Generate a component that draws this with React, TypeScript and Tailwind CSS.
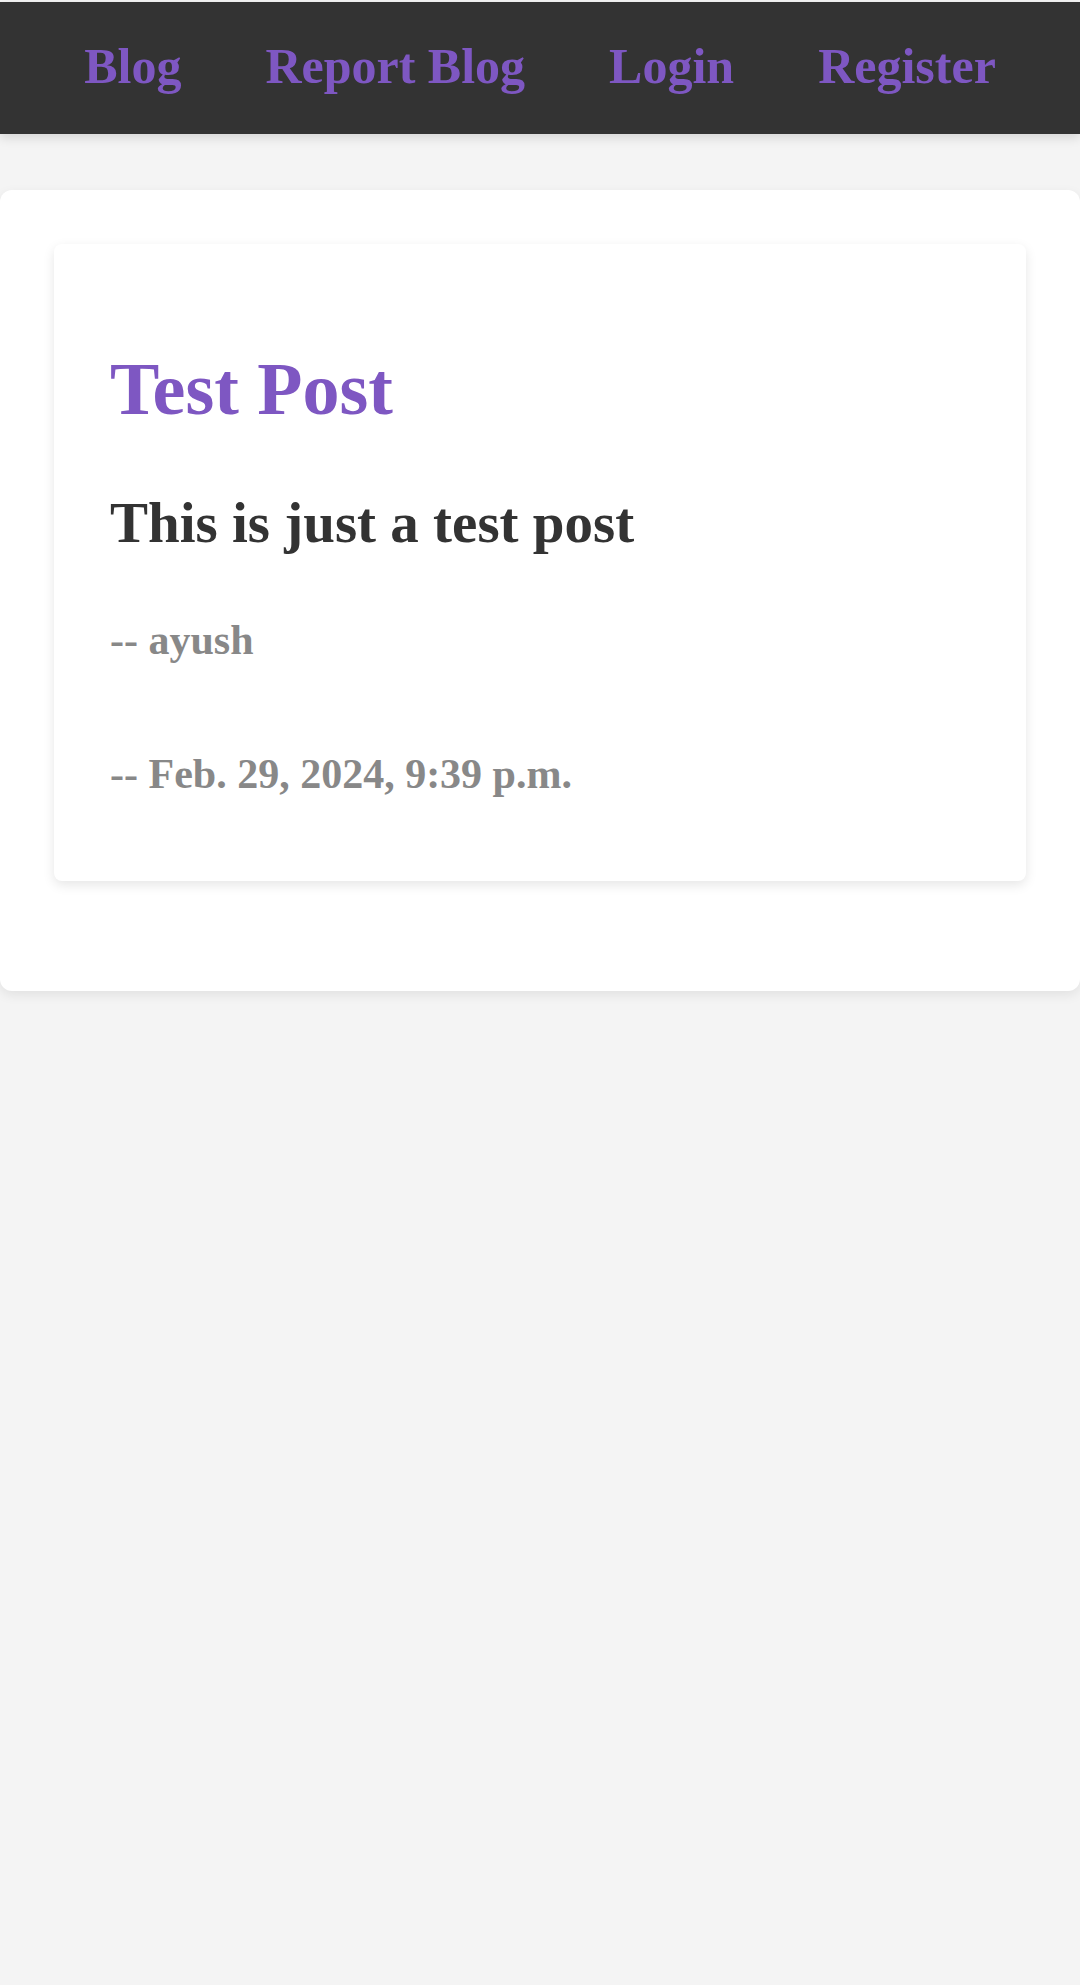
const links = ["Blog", "Report Blog", "Login", "Register"];

export default function App() {
  return (
    <div className="min-h-[1985px] bg-[#f4f4f4] pt-[2px] font-['Liberation_Serif',serif]">
      <nav className="flex h-[132px] items-center justify-center gap-[84px] bg-[#333333] pb-1 shadow-[0_4px_10px_rgba(0,0,0,0.12)]">
        {links.map((l) => (
          <a key={l} href="#" className="text-[50px] font-bold leading-none text-[#7e57c2]">
            {l}
          </a>
        ))}
      </nav>

      <main className="mt-[56px] rounded-xl bg-white px-[54px] pt-[54px] pb-[110px] shadow-[0_4px_12px_rgba(0,0,0,0.08)]">
        <article className="rounded-lg bg-white px-[56px] pt-[105px] pb-[83px] shadow-[0_4px_12px_rgba(0,0,0,0.1)]">
          <h1 className="text-[74px] font-bold leading-[80px] text-[#7e57c2]">Test Post</h1>
          <h3 className="mt-[63px] text-[57px] font-bold leading-[62px] text-[#333333]">
            This is just a test post
          </h3>
          <p className="mt-[62px] text-[42px] font-bold leading-[48px] text-[#888888]">-- ayush</p>
          <p className="mt-[86px] text-[42px] font-bold leading-[48px] text-[#888888]">
            -- Feb. 29, 2024, 9:39 p.m.
          </p>
        </article>
      </main>
    </div>
  );
}
